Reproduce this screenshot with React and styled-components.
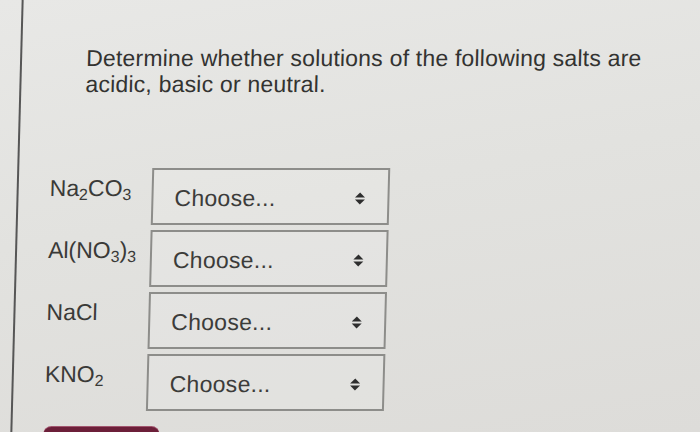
import React from "react";
import styled, { createGlobalStyle } from "styled-components";

const GlobalStyle = createGlobalStyle`
  html, body {
    margin: 0;
    padding: 0;
  }
  body {
    background: #e1e1de;
    font-family: "Liberation Sans", Arial, Helvetica, sans-serif;
  }
`;

const Screen = styled.div`
  width: 700px;
  height: 432px;
  overflow: hidden;
  background: linear-gradient(170deg, #e8e8e6 0%, #e2e2df 45%, #dddcd9 100%);
`;

const Sheet = styled.div`
  box-sizing: border-box;
  height: 432px;
  margin-left: 16px;
  padding-top: 45px;
  border-left: 2px solid #565656;
  transform: skewX(-1.5deg);
  transform-origin: 0 216px;
  color: #363636;
`;

const Question = styled.p`
  margin: 0 0 0 64px;
  width: 600px;
  font-size: 23px;
  letter-spacing: 0.2px;
  line-height: 26px;
  color: #333331;
`;

const Form = styled.div`
  margin: 71px 0 0 31px;
  display: flex;
  flex-direction: column;
  gap: 5px;
`;

const Row = styled.div`
  display: grid;
  grid-template-columns: 102px 238px;
  height: 57px;
`;

const Label = styled.div`
  padding-top: 7px;
  font-size: 23px;
  line-height: 26px;
  color: #3a3a38;
  white-space: nowrap;
`;

const Sub = styled.span`
  font-size: 16px;
  position: relative;
  top: 4px;
`;

const Select = styled.div`
  box-sizing: border-box;
  height: 57px;
  border: 2px solid #8d8d8a;
  background: rgba(255, 255, 255, 0.12);
  display: flex;
  align-items: center;
  justify-content: space-between;
  padding: 3px 22px 0 21px;
  font-size: 23px;
  letter-spacing: 0.3px;
  line-height: 26px;
  color: #3c3c3a;
`;

const Arrows = styled.svg`
  width: 11px;
  height: 13px;
  flex: none;
`;

const SubmitButton = styled.div`
  margin-top: 11px;
  width: 116px;
  height: 20px;
  border-radius: 8px 8px 0 0;
  background: #6c1f39;
  box-shadow: 0 -1px 0 #a2566f;
`;

const UpDown = () => (
  <Arrows viewBox="0 0 11 13">
    <path d="M5.5 0.5 L10.5 5.5 L0.5 5.5 Z" fill="#2e2e2e" />
    <path d="M0.5 7.5 L10.5 7.5 L5.5 12.5 Z" fill="#2e2e2e" />
  </Arrows>
);

const salts = [
  ["Na", <Sub key="a">2</Sub>, "CO", <Sub key="b">3</Sub>],
  ["Al(NO", <Sub key="a">3</Sub>, ")", <Sub key="b">3</Sub>],
  ["NaCl"],
  ["KNO", <Sub key="a">2</Sub>],
];

export default function App() {
  return (
    <>
      <GlobalStyle />
      <Screen>
        <Sheet>
          <Question>
            Determine whether solutions of the following salts are acidic,
            basic or neutral.
          </Question>
          <Form>
            {salts.map((parts, i) => (
              <Row key={i}>
                <Label>{parts}</Label>
                <Select>
                  <span>Choose...</span>
                  <UpDown />
                </Select>
              </Row>
            ))}
            <SubmitButton />
          </Form>
        </Sheet>
      </Screen>
    </>
  );
}
